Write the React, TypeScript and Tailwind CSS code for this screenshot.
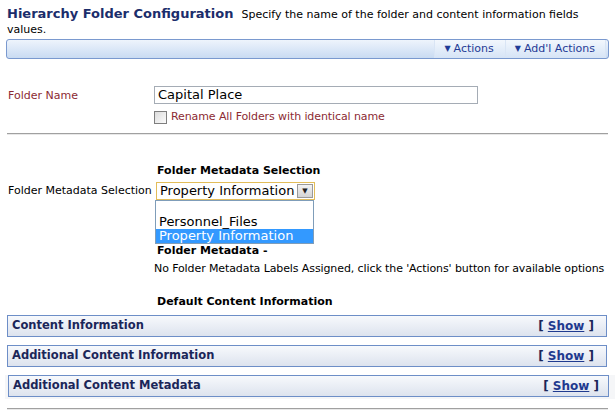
import React from "react";

const panels = [
  { title: "Content Information", wide: false },
  { title: "Additional Content Information", wide: false },
  { title: "Additional Content Metadata", wide: true },
];

function Panel({ title, wide }: { title: string; wide: boolean }) {
  return (
    <div className={wide ? "-ml-[2px] bg-[#f5f6f8] pb-[2px] pl-[3px] pr-[1px]" : ""}>
      <div
        className={
          "flex h-[22px] items-center justify-between border border-[#6d8ec7] bg-gradient-to-b from-[#f7f9fc] to-[#dde3ee] pl-[4px] " +
          (wide ? "w-[601px] pr-[9px]" : "w-[600px] pr-[12px]")
        }
      >
        <span className="text-[11.5px] font-bold text-[#1b2659]">{title}</span>
        <span className="text-[12px] font-bold text-[#1b2659]">
          [ <a className="cursor-pointer text-[#1f3a8f] underline">Show</a> ]
        </span>
      </div>
    </div>
  );
}

export default function App() {
  return (
    <div className="relative h-[413px] w-[615px] overflow-hidden bg-white font-['DejaVu_Sans',Verdana,sans-serif] text-black">
      {/* ── Header ───────────────────────────────────────────── */}
      <p className="px-[7px] pt-[6px] text-[11px] leading-[15px]">
        <span className="mr-[8px] text-[13px] font-bold text-[#1b2d6b]">
          Hierarchy Folder Configuration
        </span>
        Specify the name of the folder and content information fields values.
      </p>

      <div className="mx-[6px] mt-[2px] flex h-[20px] w-[603px] items-stretch justify-end rounded-[3px] border border-[#7a99cf] bg-gradient-to-b from-[#eef4fc] to-[#c9dbf2] pr-[2px]">
        <div className="flex items-center gap-[3px] border-x border-[#d9e5f5] bg-gradient-to-b from-[#f2f7fd] to-[#d6e4f6] pl-[9px] pr-[11px] text-[11px] text-[#1f3b96]">
          <span className="text-[8px]">▼</span>Actions
        </div>
        <div className="flex items-center gap-[3px] border-r border-[#d9e5f5] bg-gradient-to-b from-[#f2f7fd] to-[#d6e4f6] pl-[9px] pr-[10px] text-[11px] text-[#1f3b96]">
          <span className="text-[8px]">▼</span>Add'l Actions
        </div>
      </div>

      {/* ── Folder name ──────────────────────────────────────── */}
      <div className="mt-[27px] flex items-start pl-[8px]">
        <div className="w-[146px] pt-[2px] text-[11px] text-[#8c2b33]">Folder Name</div>
        <div>
          <div className="flex h-[18px] w-[324px] items-center border border-[#a5acb5] px-[3px] text-[13px]">
            Capital Place
          </div>
          <label className="mt-[5px] flex items-center gap-[4px] text-[11px] tracking-[-0.1px] text-[#8c2b33]">
            <span className="h-[13px] w-[13px] border border-[#7e7e7e] bg-gradient-to-br from-[#dcdcdc] to-[#fbfbfb]" />
            Rename All Folders with identical name
          </label>
        </div>
      </div>

      <div className="mx-[7px] mt-[7px] h-[2px] border-t border-[#a0a0a0] bg-[#e8e8e8]" />

      {/* ── Metadata selection ───────────────────────────────── */}
      <div className="mt-[28px] pl-[157px] text-[11px] font-bold">Folder Metadata Selection</div>
      <div className="relative mt-[3px] flex items-center pl-[8px]">
        <div className="w-[148px] text-[11px]">Folder Metadata Selection</div>
        <div className="flex h-[18px] w-[159px] items-center justify-between border border-[#e2bd5a] pl-[3px] pr-[1px] text-[13px]">
          Property Information
          <span className="flex h-[14px] w-[16px] items-center justify-center border border-[#9a9a9a] bg-gradient-to-b from-[#f3f3f3] to-[#d4d4d4] text-[7px] text-[#222]">
            ▼
          </span>
        </div>
        <div className="absolute left-[155px] top-[18px] z-10 w-[159px] border border-[#7f9db9] bg-white text-[13px] leading-[14px]">
          <div className="h-[14px]" />
          <div className="px-[3px]">Personnel_Files</div>
          <div className="bg-[#3399ff] px-[3px] text-white">Property Information</div>
        </div>
      </div>

      <div className="mt-[43px] pl-[157px] text-[11px] font-bold">Folder Metadata -</div>
      <div className="mt-[1px] pl-[154px] text-[11px] tracking-[-0.1px]">
        No Folder Metadata Labels Assigned, click the 'Actions' button for available options
      </div>

      {/* ── Default content ──────────────────────────────────── */}
      <div className="mt-[17px] pl-[157px] text-[11px] font-bold">Default Content Information</div>
      <div className="mt-[4px] flex flex-col gap-[8px] pl-[7px]">
        {panels.map((p) => (
          <Panel key={p.title} title={p.title} wide={p.wide} />
        ))}
      </div>
      <div className="mx-[7px] mt-[9px] h-[2px] border-t border-[#a0a0a0] bg-[#e8e8e8]" />
    </div>
  );
}
